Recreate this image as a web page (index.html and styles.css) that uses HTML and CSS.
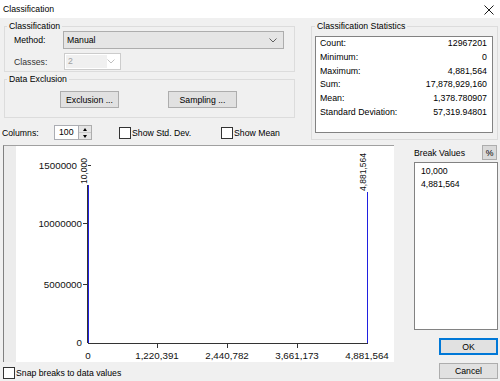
FILE: index.html
```html
<!DOCTYPE html>
<html lang="en">
<head>
    <meta charset="UTF-8">
    <meta name="viewport" content="width=device-width, initial-scale=1.0">
    <title>Classification</title>
    <link rel="stylesheet" href="styles.css">
</head>
<body>
    <div class="titlebar">
        <span>Classification</span>
        <svg class="close" width="10" height="10" viewBox="0 0 10 10">
            <path d="M0.5 0.5 L9.5 9.5 M9.5 0.5 L0.5 9.5" stroke="#1a1a1a" stroke-width="1" fill="none"/>
        </svg>
    </div>

    <div class="top">
        <div class="left-col">
            <fieldset class="group grp-class">
                <legend>Classification</legend>
                <div class="field-row">
                    <label>Method:</label>
                    <div class="combo combo-method">
                        <span>Manual</span>
                        <svg width="8" height="5" viewBox="0 0 8 5"><polyline points="0.5,0.5 4,4 7.5,0.5" stroke="#606060" fill="none"/></svg>
                    </div>
                </div>
                <div class="field-row classes-row">
                    <label class="dim">Classes:</label>
                    <div class="combo combo-classes">
                        <span class="combo-text">2</span>
                        <svg width="8" height="5" viewBox="0 0 8 5"><polyline points="0.5,0.5 4,4 7.5,0.5" stroke="#c0c0c0" fill="none"/></svg>
                    </div>
                </div>
            </fieldset>

            <fieldset class="group grp-excl">
                <legend>Data Exclusion</legend>
                <div class="btn-row">
                    <button class="btn btn-excl">Exclusion ...</button>
                    <button class="btn btn-samp">Sampling ...</button>
                </div>
            </fieldset>

            <div class="options">
                <span class="opt-label">Columns:</span>
                <div class="spin">
                    <span class="spin-input">100</span>
                    <div class="spin-btns">
                        <span class="spin-up"></span>
                        <span class="spin-down"></span>
                    </div>
                </div>
                <div class="check check-std"><span class="box"></span>Show Std. Dev.</div>
                <div class="check"><span class="box"></span>Show Mean</div>
            </div>
        </div>

        <fieldset class="group grp-stats">
            <legend>Classification Statistics</legend>
            <div class="stats">
                <div class="stat-row"><span>Count:</span><span>12967201</span></div>
                <div class="stat-row"><span>Minimum:</span><span>0</span></div>
                <div class="stat-row"><span>Maximum:</span><span>4,881,564</span></div>
                <div class="stat-row"><span>Sum:</span><span>17,878,929,160</span></div>
                <div class="stat-row"><span>Mean:</span><span>1,378.780907</span></div>
                <div class="stat-row"><span>Standard Deviation:</span><span>57,319.94801</span></div>
            </div>
        </fieldset>
    </div>

    <div class="main">
        <div class="chart-col">
            <div class="chart">
                <div class="strip"></div>
                <svg class="plot" width="378" height="216" viewBox="0 0 378 216">
                    <g class="ylabels" text-anchor="end">
                        <text x="61" y="22.5">1500000</text>
                        <text x="66" y="80.5">10000000</text>
                        <text x="66" y="141.5">5000000</text>
                        <text x="66" y="200">0</text>
                    </g>
                    <g stroke="#333" stroke-width="1">
                        <line x1="72" y1="19.5" x2="75" y2="19.5"/>
                        <line x1="67" y1="77.5" x2="73" y2="77.5"/>
                        <line x1="67" y1="138.5" x2="73" y2="138.5"/>
                        <line x1="71.5" y1="39" x2="71.5" y2="197"/>
                        <line x1="72" y1="197.5" x2="352" y2="197.5"/>
                        <line x1="141.5" y1="197" x2="141.5" y2="202"/>
                        <line x1="211.5" y1="197" x2="211.5" y2="202"/>
                        <line x1="281.5" y1="197" x2="281.5" y2="202"/>
                    </g>
                    <line x1="72.5" y1="39" x2="72.5" y2="197" stroke="#2020e0" stroke-width="1"/>
                    <line x1="351.5" y1="46" x2="351.5" y2="197" stroke="#2020e0" stroke-width="1"/>
                    <g class="xlabels" text-anchor="middle">
                        <text x="72" y="213">0</text>
                        <text x="141" y="213">1,220,391</text>
                        <text x="211" y="213">2,440,782</text>
                        <text x="281" y="213">3,661,173</text>
                        <text x="351" y="213">4,881,564</text>
                    </g>
                    <g class="breaklabels" text-anchor="middle">
                        <text transform="translate(70.5 25) rotate(-90)">10,000</text>
                        <text transform="translate(349.5 26) rotate(-90)">4,881,564</text>
                    </g>
                </svg>
            </div>
            <div class="check snap"><span class="box"></span>Snap breaks to data values</div>
        </div>

        <div class="side">
            <div class="side-head">
                <span>Break Values</span>
                <button class="btn btn-pct">%</button>
            </div>
            <div class="break-list">
                <div>10,000</div>
                <div>4,881,564</div>
            </div>
            <button class="btn btn-ok">OK</button>
            <button class="btn btn-cancel">Cancel</button>
        </div>
    </div>
</body>
</html>
```

FILE: styles.css
```css
* {
    box-sizing: border-box;
}
body {
    margin: 0;
    width: 500px;
    height: 381px;
    overflow: hidden;
    background: #f0f0f0;
    font-family: "Liberation Sans", Arial, sans-serif;
    font-size: 8.7px;
    color: #000;
}
.titlebar {
    height: 18px;
    background: #fff;
    display: flex;
    align-items: center;
    justify-content: space-between;
    padding: 0 6px 0 3px;
}
.close {
    margin-top: 1px;
}

/* top area */
.top {
    display: flex;
    gap: 16px;
    padding-left: 4px;
    margin-top: 3px;
}
.left-col {
    width: 291px;
}
.group {
    margin: 0;
    padding: 0;
    min-width: 0;
    border: 1px solid #dcdcdc;
}
.group legend {
    padding: 0 2px;
    margin-left: 2px;
    line-height: 10px;
}
.grp-class {
    padding-bottom: 1px;
}
.field-row {
    display: flex;
    align-items: center;
    padding-left: 9px;
}
.field-row label {
    width: 49px;
}
.classes-row {
    margin-top: 4px;
}
.dim {
    color: #333;
}
.combo {
    display: flex;
    align-items: center;
    justify-content: space-between;
    border: 1px solid #adadad;
}
.combo-method {
    width: 221px;
    height: 18px;
    background: #e5e5e5;
    padding: 0 6px 0 3px;
}
.combo-classes {
    width: 57px;
    height: 17px;
    margin-left: 1px;
    background: #fff;
    border-color: #cccccc;
    color: #a0a0a0;
    padding: 1px 5px 1px 1px;
}
.combo-text {
    align-self: stretch;
    width: 41px;
    background: #f0f0f0;
    padding-left: 2px;
    line-height: 13px;
}

.grp-excl {
    margin-top: 2px;
    padding-bottom: 9px;
}
.btn-row {
    display: flex;
    gap: 49px;
    padding-left: 55px;
    margin-top: 7px;
}
.btn {
    background: #e1e1e1;
    border: 1px solid #adadad;
    font-family: inherit;
    font-size: inherit;
    color: #000;
    padding: 0;
    margin: 0;
}
.btn-excl {
    width: 59px;
    height: 17px;
}
.btn-samp {
    width: 69px;
    height: 17px;
}

.options {
    display: flex;
    align-items: center;
    height: 15px;
    margin: 7px 0 0 -2px;
    white-space: nowrap;
}
.opt-label {
    width: 52px;
}
.spin {
    display: flex;
    height: 15px;
    width: 38px;
}
.spin-input {
    width: 25px;
    background: #fff;
    border: 1px solid #abadb3;
    padding-left: 4px;
    line-height: 13px;
}
.spin-btns {
    width: 13px;
    display: flex;
    flex-direction: column;
    border: 1px solid #adadad;
    border-left: none;
    background: #e5e5e5;
}
.spin-up,
.spin-down {
    flex: 1;
    display: flex;
    align-items: center;
    justify-content: center;
}
.spin-up {
    border-bottom: 1px solid #c8c8c8;
}
.spin-up::after {
    content: "";
    border-left: 2.5px solid transparent;
    border-right: 2.5px solid transparent;
    border-bottom: 3px solid #000;
}
.spin-down::after {
    content: "";
    border-left: 2.5px solid transparent;
    border-right: 2.5px solid transparent;
    border-top: 3px solid #000;
}
.check {
    display: flex;
    align-items: center;
    white-space: nowrap;
}
.check-std {
    width: 102px;
    margin-left: 27px;
}
.box {
    width: 12px;
    height: 12px;
    border: 1px solid #333;
    background: #fff;
    margin-right: 1px;
}

.grp-stats {
    width: 187px;
    padding-bottom: 4px;
}
.grp-stats legend {
    margin-left: 3px;
}
.stats {
    width: 178px;
    height: 97px;
    margin: 5px 0 0 3px;
    background: #fff;
    border: 1px solid #828282;
    padding: 0 5px 0 4px;
    font-size: 8.8px;
}
.stat-row {
    display: flex;
    justify-content: space-between;
    line-height: 13.8px;
}

/* histogram and break values */
.main {
    display: flex;
    gap: 20px;
    padding-left: 3px;
    margin-top: 5px;
}
.chart-col {
    width: 391px;
}
.chart {
    display: flex;
    height: 217px;
    border-top: 1px solid #a0a0a0;
    border-left: 1px solid #808080;
}
.strip {
    width: 12px;
    background: #ececec;
}
.plot {
    display: block;
    background: #fff;
}
.plot text {
    font-family: "Liberation Sans", Arial, sans-serif;
    font-size: 9.8px;
    fill: #111;
}
.plot .breaklabels text {
    font-size: 8.5px;
}
.snap {
    margin-top: 4px;
    height: 13px;
}

.side {
    width: 84px;
    display: flex;
    flex-direction: column;
}
.side-head {
    display: flex;
    align-items: center;
    justify-content: space-between;
    height: 15px;
}
.btn-pct {
    width: 15px;
    height: 15px;
    margin-right: 1px;
    background: #dadada;
}
.break-list {
    margin-top: 2px;
    height: 168px;
    background: #fff;
    border: 1px solid #828282;
    padding: 2px 0 0 6px;
    line-height: 13px;
}
.btn-ok,
.btn-cancel {
    align-self: flex-end;
    width: 59px;
    margin-top: 8px;
}
.btn-ok {
    height: 17px;
    border-color: #0078d7;
    box-shadow: inset 0 0 0 1px #0078d7;
}
.btn-cancel {
    height: 16px;
}
```
